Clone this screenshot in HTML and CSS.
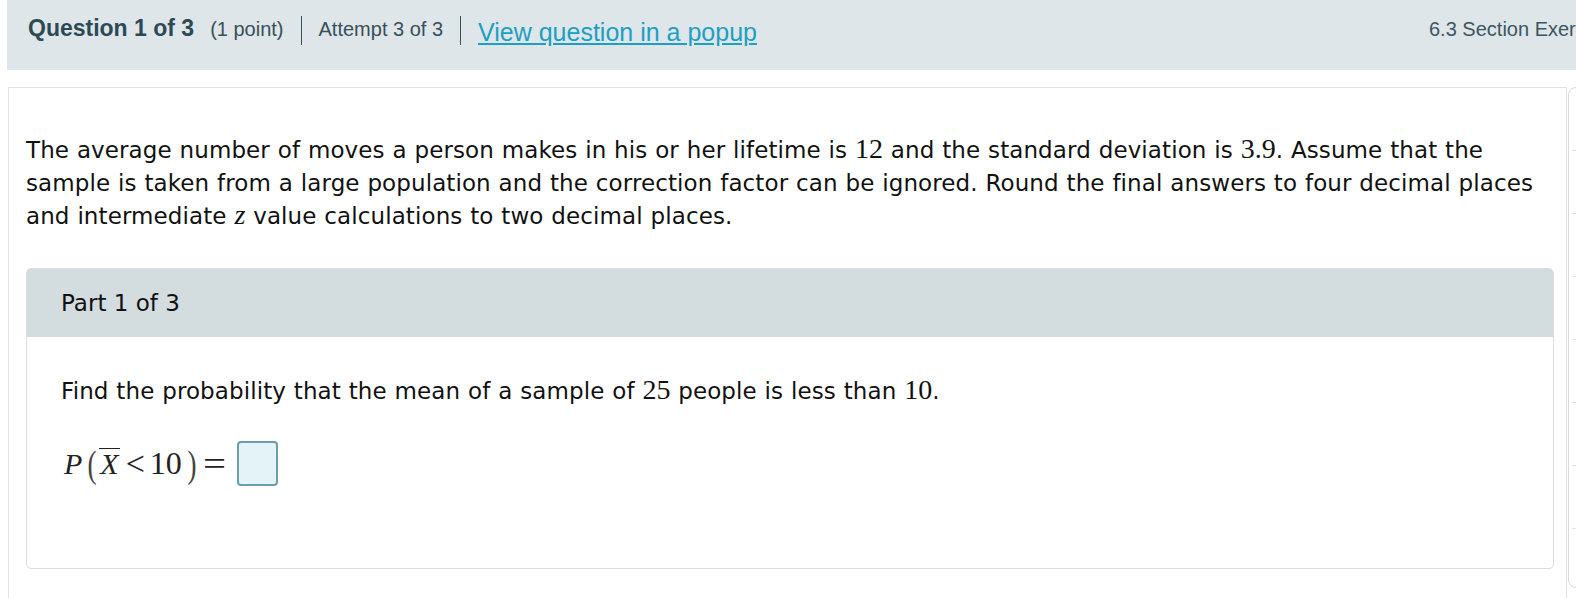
FILE: index.html
```html
<!DOCTYPE html>
<html>
<head>
    <title>Question 1 of 3</title>
    <meta charset="UTF-8">
    <link rel="stylesheet" href="styles.css">
</head>
<body>
    <header class="q-bar">
        <div class="q-meta">
            <span class="q-title">Question 1 of 3</span>
            <span class="q-points">(1 point)</span>
            <span class="q-sep"></span>
            <span class="q-attempt">Attempt 3 of 3</span>
            <span class="q-sep"></span>
            <a class="q-popup" href="#">View question in a popup</a>
        </div>
        <div class="q-section">6.3 Section Exercises</div>
    </header>

    <div class="content">
        <main class="question-card">
            <p class="stem">The average number of moves a person makes in his or her lifetime is <span class="num">12</span> and the standard deviation is <span class="num">3.9</span>. Assume that the sample is taken from a large population and the correction factor can be ignored. Round the final answers to four decimal places and intermediate <span class="var">z</span> value calculations to two decimal places.</p>

            <section class="part-card">
                <div class="part-head">Part 1 of 3</div>
                <div class="part-body">
                    <p class="part-text">Find the probability that the mean of a sample of <span class="num">25</span> people is less than <span class="num">10</span>.</p>
                    <div class="math-row">
                        <span class="mi">P</span>
                        <span class="paren">(</span>
                        <span class="mi bar">X</span>
                        <span class="mo lt">&lt;</span>
                        <span class="mn">10</span>
                        <span class="paren">)</span>
                        <span class="mo eq">=</span>
                        <span class="answer-box"></span>
                    </div>
                </div>
            </section>
        </main>

        <aside class="side-panel">
            <div class="side-row"></div>
            <div class="side-row"></div>
            <div class="side-row"></div>
            <div class="side-row"></div>
            <div class="side-row"></div>
            <div class="side-row"></div>
            <div class="side-row"></div>
            <div class="side-row"></div>
        </aside>
    </div>
</body>
</html>
```

FILE: styles.css
```css
html, body {
    overflow: hidden;
}
body {
    margin: 0;
    background-color: #fff;
    font-family: "DejaVu Sans", Verdana, sans-serif;
    color: #111;
}

/* top bar */
.q-bar {
    margin-left: 7px;
    width: 1800px;
    height: 70px;
    background-color: #dfe6e9;
    display: grid;
    grid-template-columns: 1401px auto;
    padding-left: 21px;
    box-sizing: border-box;
    font-family: "Liberation Sans", Arial, sans-serif;
    color: #2c4954;
}
.q-meta {
    display: flex;
    align-items: flex-start;
    padding-top: 13px;
    line-height: 30px;
    white-space: nowrap;
}
.q-title {
    font-size: 23px;
    font-weight: bold;
}
.q-points {
    font-size: 20px;
    margin: 1px 0 0 16px;
    color: #3a4f58;
}
.q-attempt {
    font-size: 20px;
    margin-top: 1px;
    color: #3a4f58;
}
.q-sep {
    width: 1px;
    height: 29px;
    margin: 3px 17px 0 17px;
    background-color: #3a4f58;
}
.q-popup {
    font-size: 25px;
    margin: 4px 0 0 0;
    color: #1b9fc2;
    text-decoration: underline;
}
.q-section {
    padding-top: 14px;
    font-size: 20px;
    line-height: 30px;
    color: #3d5560;
    white-space: nowrap;
}

/* content */
.content {
    display: flex;
    align-items: flex-start;
    margin-top: 17px;
    width: 1800px;
}
.question-card {
    flex: 0 0 1559px;
    margin-left: 8px;
    min-height: 620px;
    box-sizing: border-box;
    border: 1px solid #e2e2e2;
    border-bottom: none;
    padding: 46px 12px 0 17px;
}
.stem,
.part-text {
    margin: 0;
    font-size: 23px;
    line-height: 33px;
    letter-spacing: 0.1px;
    word-spacing: 0.4px;
}
.num {
    font-family: "Liberation Serif", "Times New Roman", serif;
    font-size: 28px;
    line-height: 1;
    letter-spacing: 0;
}
.var {
    font-family: "Liberation Serif", "Times New Roman", serif;
    font-style: italic;
    font-size: 28px;
    line-height: 1;
}

.part-card {
    margin-top: 35px;
    border: 1px solid #dcdcdc;
    border-radius: 5px;
    overflow: hidden;
}
.part-head {
    background-color: #d3dcdf;
    padding: 18px 34px 17px;
    font-size: 23px;
    line-height: 33px;
}
.part-body {
    padding: 38px 34px 82px;
}

.math-row {
    display: flex;
    align-items: center;
    height: 45px;
    margin: 33px 0 0 3px;
    font-family: "Liberation Serif", "Times New Roman", serif;
    font-size: 30px;
    color: #222;
}
.mi {
    font-style: italic;
}
.mn {
    font-size: 32px;
}
.paren {
    display: inline-block;
    color: #444;
    transform: scale(0.9, 1.25);
    margin: 0 2px 0 5px;
}
.bar {
    display: inline-block;
    line-height: 1;
    padding: 0 1px;
    border-top: 1px solid #222;
}
.lt {
    font-size: 34px;
    margin: 0 5px 0 6px;
}
.eq {
    display: inline-block;
    font-size: 34px;
    transform: scaleX(1.2);
    margin: 0 13px 0 6px;
}
.answer-box {
    width: 37px;
    height: 41px;
    border: 2px solid #6a9ea9;
    border-radius: 4px;
    background-color: #e3f3f8;
}

/* right panel */
.side-panel {
    flex: 0 0 220px;
    margin-left: 1px;
    height: 501px;
    box-sizing: border-box;
    border: 1px solid #dadada;
    border-radius: 8px;
    overflow: hidden;
}
.side-row {
    height: 62px;
    margin-left: 3px;
    border-bottom: 1px solid #e4e4e4;
}
```
